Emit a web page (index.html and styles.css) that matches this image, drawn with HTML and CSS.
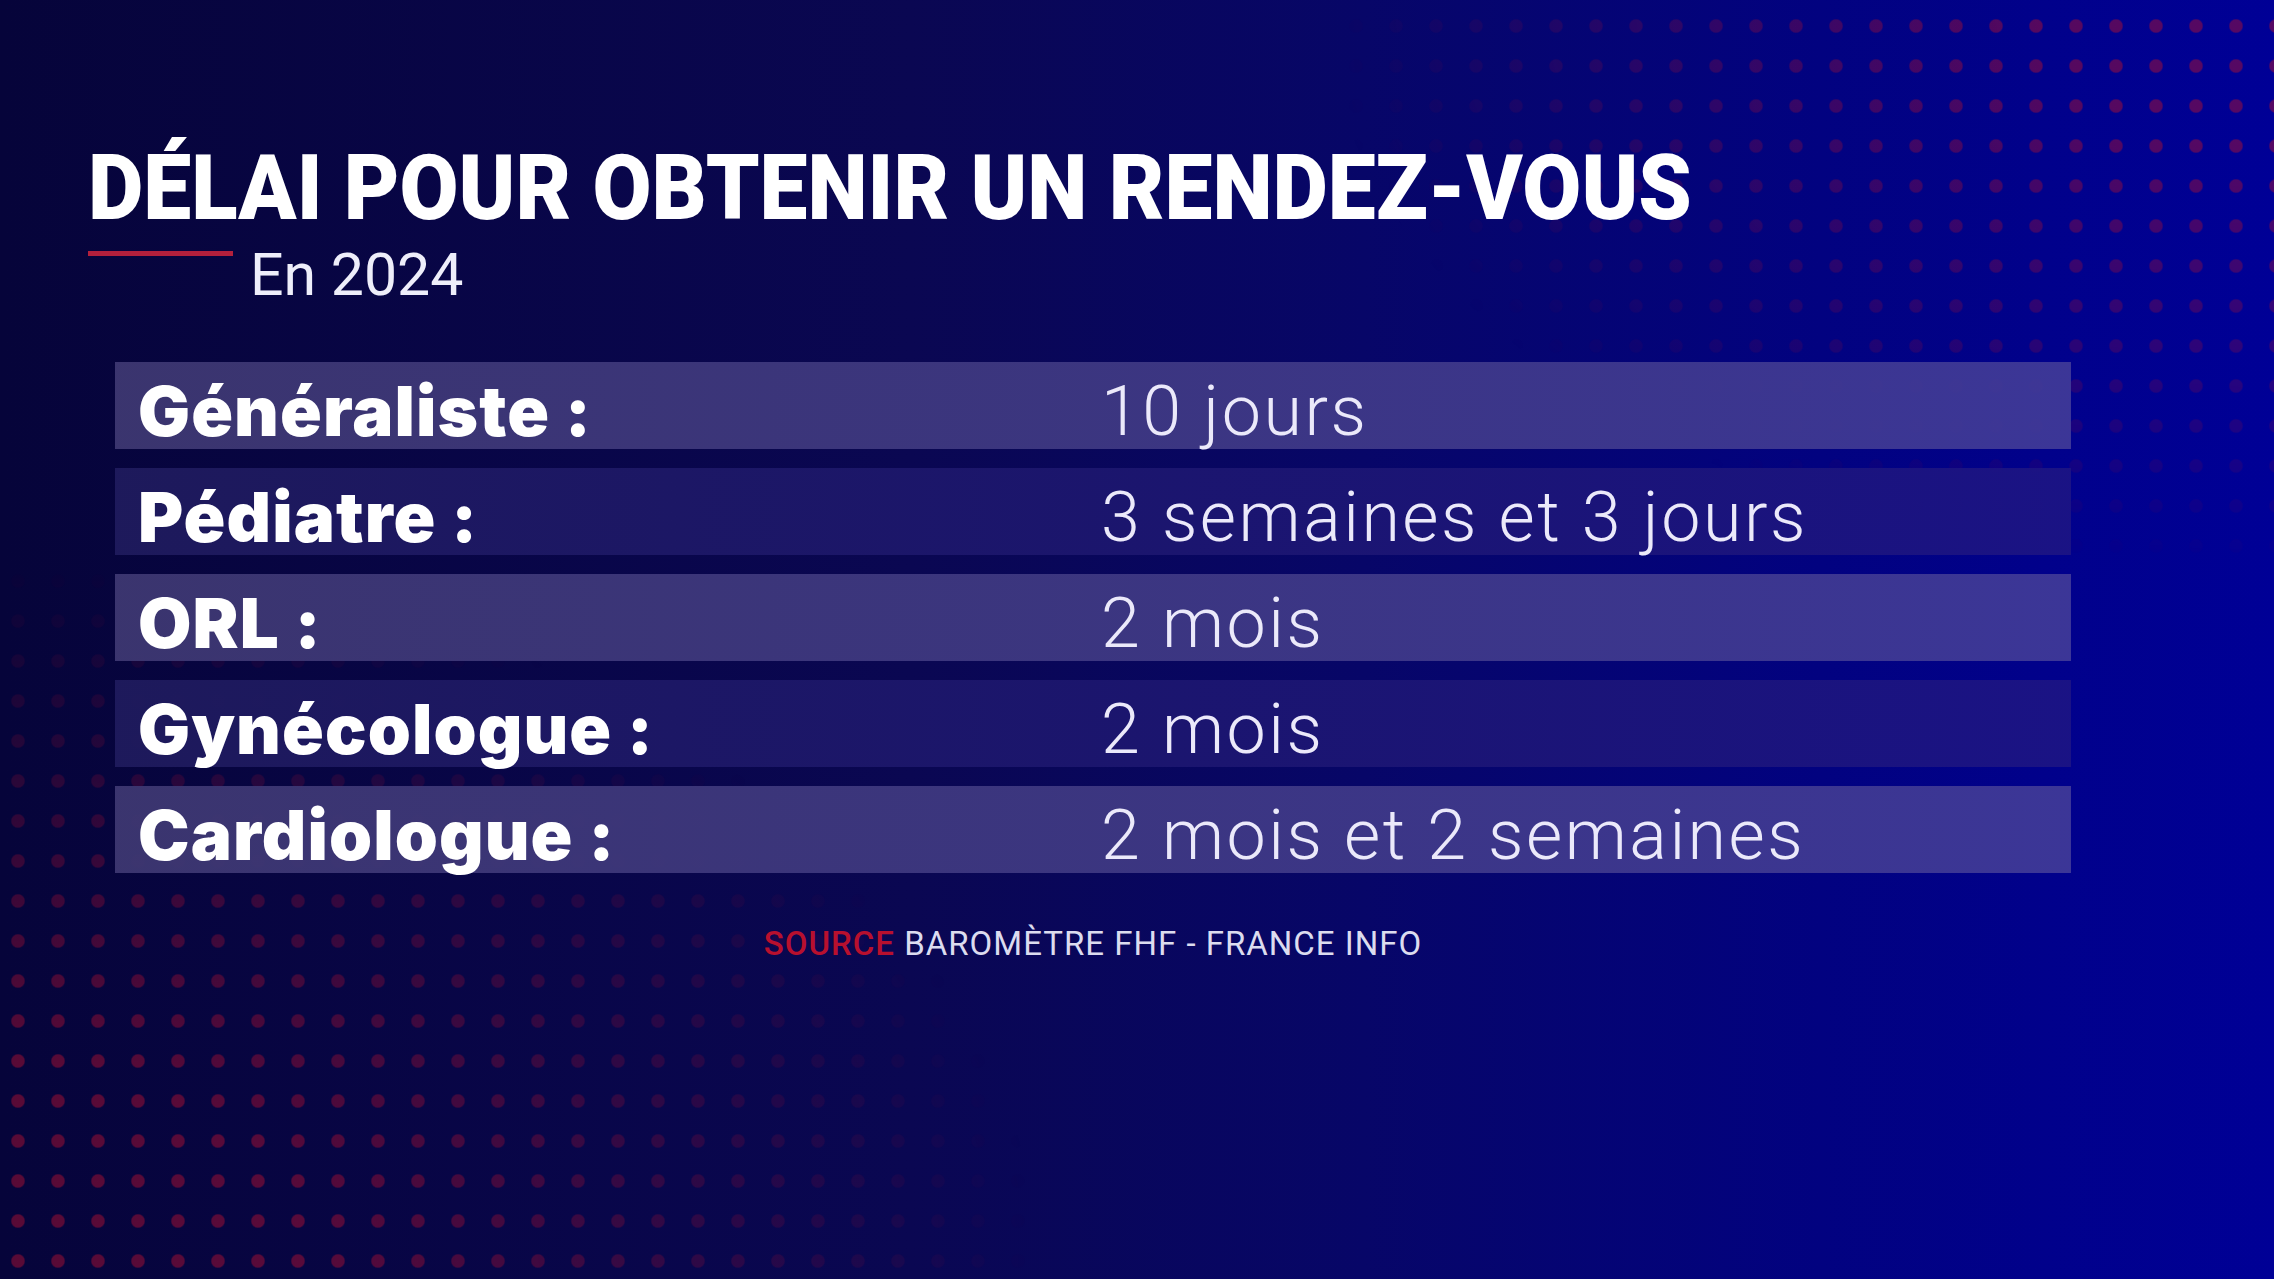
FILE: index.html
```html
<!DOCTYPE html>
<html lang="fr">
<head>
<meta charset="utf-8">
<title>Délai pour obtenir un rendez-vous</title>
<link rel="stylesheet" href="styles.css">
</head>
<body>
<main class="screen">
  <div class="dots dots-tr"></div>
  <div class="dots dots-bl"></div>
  <header class="head">
    <h1 class="title"><span class="title-text">DÉLAI POUR OBTENIR UN RENDEZ-VOUS</span></h1>
    <div class="sub">
      <span class="sub-line"></span>
      <span class="sub-text">En 2024</span>
    </div>
  </header>
  <section class="table">
    <div class="row odd"><span class="label">Généraliste :</span><span class="value">10 jours</span></div>
    <div class="row even"><span class="label">Pédiatre :</span><span class="value">3 semaines et 3 jours</span></div>
    <div class="row odd"><span class="label">ORL :</span><span class="value">2 mois</span></div>
    <div class="row even"><span class="label">Gynécologue :</span><span class="value">2 mois</span></div>
    <div class="row odd"><span class="label">Cardiologue :</span><span class="value">2 mois et 2 semaines</span></div>
    <p class="source"><span class="source-key">SOURCE</span> BAROMÈTRE FHF - FRANCE INFO</p>
  </section>
</main>
</body>
</html>
```

FILE: styles.css
```css
html, body {
  margin: 0;
  padding: 0;
  width: 2274px;
  height: 1279px;
  overflow: hidden;
}

.screen {
  position: relative;
  width: 2274px;
  height: 1279px;
  overflow: hidden;
  background: linear-gradient(90deg, #06043a 0%, #0a0752 40%, #070668 60%, #020280 80%, #000096 100%);
  font-family: Roboto, "Liberation Sans", sans-serif;
  color: #ffffff;
  display: flex;
  flex-direction: column;
}

.dots {
  position: absolute;
  pointer-events: none;
  background-image: radial-gradient(circle, rgba(170, 16, 50, 0.5) 6px, rgba(170, 16, 50, 0) 7.5px);
  background-size: 40px 40px;
}

.dots-tr {
  right: 0;
  top: 0;
  width: 1000px;
  height: 640px;
  background-position: -18px 6px;
  -webkit-mask-image: radial-gradient(ellipse 95% 90% at 100% 0%, #000 25%, rgba(0,0,0,0) 100%);
  mask-image: radial-gradient(ellipse 95% 90% at 100% 0%, #000 25%, rgba(0,0,0,0) 100%);
}

.dots-bl {
  left: 0;
  bottom: 0;
  width: 1300px;
  height: 760px;
  background-position: -2px 2px;
  -webkit-mask-image: radial-gradient(ellipse 80% 95% at 0% 100%, #000 30%, rgba(0,0,0,0) 100%);
  mask-image: radial-gradient(ellipse 80% 95% at 0% 100%, #000 30%, rgba(0,0,0,0) 100%);
}

.head {
  position: relative;
  padding: 143px 0 0 88px;
}

.title {
  margin: 0;
  font-family: Roboto, "Liberation Sans", sans-serif;
  font-weight: 900;
  font-size: 91px;
  line-height: 91px;
  white-space: nowrap;
}

.title-text {
  display: inline-block;
  transform: scaleX(0.94);
  transform-origin: 0 50%;
}

.sub {
  display: flex;
  align-items: flex-start;
  margin-top: 11px;
}

.sub-line {
  width: 145px;
  height: 5px;
  margin-top: 6px;
  background: #b3203c;
}

.sub-text {
  margin-left: 17px;
  font-size: 59px;
  line-height: 59px;
  font-weight: 400;
  color: #eeeefa;
}

.table {
  position: relative;
  margin: 58px 0 0 115px;
  width: 1956px;
  display: flex;
  flex-direction: column;
  gap: 19px;
}

.row {
  height: 87px;
  display: grid;
  grid-template-columns: 963px 1fr;
  align-items: center;
  padding-left: 23px;
}

.row.odd {
  background: linear-gradient(90deg, rgba(60, 54, 112, 0.97) 0%, rgba(62, 56, 130, 0.95) 50%, rgba(64, 58, 152, 0.93) 100%);
}

.row.even {
  background: linear-gradient(90deg, rgba(30, 26, 92, 0.97) 0%, rgba(28, 22, 110, 0.95) 50%, rgba(28, 20, 132, 0.93) 100%);
}

.label {
  font-family: Inter, "Liberation Sans", sans-serif;
  font-weight: 900;
  font-size: 69px;
  line-height: 87px;
  padding-top: 5px;
  letter-spacing: 1.1px;
  white-space: nowrap;
}

.value {
  font-family: Roboto, "Liberation Sans", sans-serif;
  font-weight: 300;
  font-size: 70px;
  line-height: 87px;
  padding-top: 6px;
  letter-spacing: 2.5px;
  color: #ebe9fa;
  white-space: nowrap;
}

.source {
  margin: 35px 0 0 0;
  text-align: center;
  font-size: 33px;
  line-height: 33px;
  letter-spacing: 1px;
  color: #dcdcef;
  font-weight: 400;
}

.source-key {
  color: #b8102e;
  font-weight: 500;
}
```
